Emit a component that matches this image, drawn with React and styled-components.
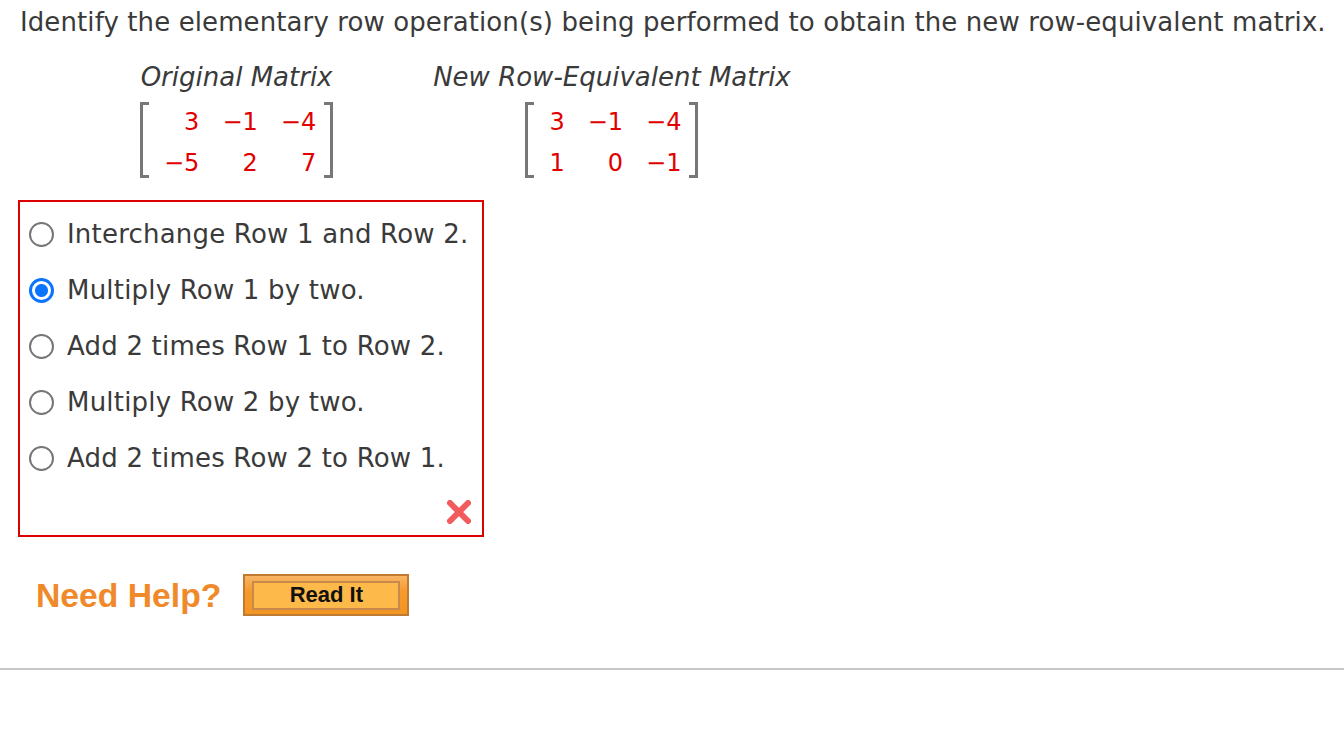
import React from "react";
import styled, { createGlobalStyle } from "styled-components";

const GlobalStyle = createGlobalStyle`
  body {
    margin: 0;
    background: #fff;
    font-family: "DejaVu Sans", Verdana, sans-serif;
    color: #3a3a3a;
  }
`;

const original = [
  ["3", "\u22121", "\u22124"],
  ["\u22125", "2", "7"],
];

const changed = [
  ["3", "\u22121", "\u22124"],
  ["1", "0", "\u22121"],
];

const options = [
  { label: "Interchange Row 1 and Row 2.", checked: false },
  { label: "Multiply Row 1 by two.", checked: true },
  { label: "Add 2 times Row 1 to Row 2.", checked: false },
  { label: "Multiply Row 2 by two.", checked: false },
  { label: "Add 2 times Row 2 to Row 1.", checked: false },
];

export default function App() {
  return (
    <Page>
      <GlobalStyle />
      <Question>
        Identify the elementary row operation(s) being performed to obtain the
        new row-equivalent matrix.
      </Question>

      <Matrices>
        <MatrixBlock>
          <MatrixLabel>Original Matrix</MatrixLabel>
          <Matrix rows={original} />
        </MatrixBlock>
        <MatrixBlock>
          <MatrixLabel>New Row-Equivalent Matrix</MatrixLabel>
          <Matrix rows={changed} />
        </MatrixBlock>
      </Matrices>

      <AnswerBox>
        {options.map((o) => (
          <Option key={o.label}>
            <Radio checked={o.checked} />
            <span>{o.label}</span>
          </Option>
        ))}
        <Mark>
          <svg width="28" height="28" viewBox="0 0 28 28">
            <g stroke="#f25a5e" strokeWidth="6" strokeLinecap="round">
              <line x1="5" y1="5" x2="23" y2="23" />
              <line x1="23" y1="5" x2="5" y2="23" />
            </g>
          </svg>
        </Mark>
      </AnswerBox>

      <HelpRow>
        <HelpText>Need Help?</HelpText>
        <ReadButton>
          <ReadInner>Read It</ReadInner>
        </ReadButton>
      </HelpRow>

      <Divider />
    </Page>
  );
}

function Matrix({ rows }) {
  return (
    <MatrixWrap>
      <Bracket side="left" />
      <Grid>
        {rows.flat().map((v, i) => (
          <Cell key={i}>{v}</Cell>
        ))}
      </Grid>
      <Bracket side="right" />
    </MatrixWrap>
  );
}

const Page = styled.div`
  padding: 4px 0 0 0;
`;

const Question = styled.p`
  margin: 0 0 0 20px;
  font-size: 26px;
  line-height: 36px;
  letter-spacing: 0.1px;
  white-space: nowrap;
`;

const Matrices = styled.div`
  display: flex;
  gap: 100px;
  margin: 22px 0 0 140px;
`;

const MatrixBlock = styled.div`
  display: flex;
  flex-direction: column;
  align-items: center;
`;

const MatrixLabel = styled.div`
  font-style: italic;
  font-size: 26px;
  line-height: 30px;
  white-space: nowrap;
`;

const MatrixWrap = styled.div`
  display: flex;
  align-items: stretch;
  margin-top: 10px;
  height: 76px;
`;

const Bracket = styled.div`
  width: 6px;
  border: 3px solid #777;
  border-${(p) => (p.side === "left" ? "right" : "left")}: none;
`;

const Grid = styled.div`
  display: grid;
  grid-template-columns: repeat(3, auto);
  column-gap: 23px;
  padding: 6px 8px 0 15px;
  align-content: center;
`;

const Cell = styled.div`
  color: #e10000;
  font-size: 24px;
  line-height: 41px;
  text-align: right;
`;

const AnswerBox = styled.div`
  margin: 22px 0 0 18px;
  width: 466px;
  height: 337px;
  box-sizing: border-box;
  border: 2px solid #dd0000;
  padding: 4px 9px 0 9px;
  display: flex;
  flex-direction: column;
`;

const Option = styled.label`
  display: flex;
  align-items: center;
  gap: 13px;
  font-size: 26px;
  letter-spacing: 0.2px;
  height: 56px;
  white-space: nowrap;
`;

const Radio = styled.span`
  flex: none;
  width: 25px;
  height: 25px;
  border-radius: 50%;
  box-sizing: border-box;
  border: ${(p) => (p.checked ? "3px solid #0a74ff" : "2px solid #767676")};
  background: ${(p) =>
    p.checked ? "radial-gradient(circle, #0a74ff 0 6px, #fff 7px)" : "#fff"};
`;

const Mark = styled.div`
  display: flex;
  justify-content: flex-end;
  margin-top: 12px;
  svg {
    filter: blur(0.6px);
  }
`;

const HelpRow = styled.div`
  display: flex;
  align-items: center;
  gap: 22px;
  margin: 37px 0 0 36px;
`;

const HelpText = styled.div`
  font-family: "Liberation Sans", Arial, sans-serif;
  font-weight: bold;
  font-size: 33.7px;
  color: #f0892a;
`;

const ReadButton = styled.div`
  width: 166px;
  height: 42px;
  box-sizing: border-box;
  border: 2px solid #c07a32;
  background: linear-gradient(#f8b565, #f59a2e 40%, #f39523);
  display: flex;
  align-items: center;
  justify-content: center;
`;

const ReadInner = styled.div`
  width: 148px;
  height: 29px;
  box-sizing: border-box;
  border: 2px solid #c88a4a;
  background: #fdb94a;
  font-family: "Liberation Sans", Arial, sans-serif;
  font-weight: bold;
  font-size: 22px;
  color: #111;
  display: flex;
  align-items: center;
  justify-content: center;
`;

const Divider = styled.div`
  height: 2px;
  background: #c8c8c8;
  margin-top: 52px;
`;
